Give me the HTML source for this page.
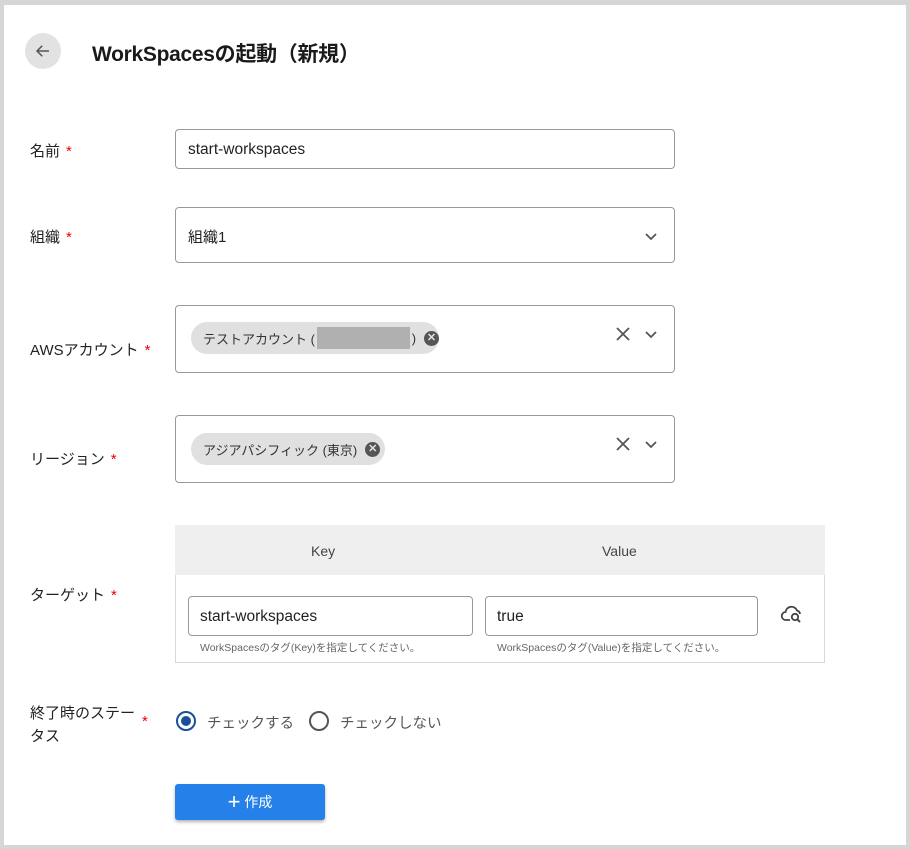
<!DOCTYPE html>
<html><head><meta charset="utf-8"><style>
*{box-sizing:border-box;margin:0;padding:0}
body{width:910px;height:849px;background:#d6d6d6;font-family:"Liberation Sans","Noto Sans CJK JP",sans-serif;color:#222;position:relative;overflow:hidden}
.page{position:absolute;left:4px;top:5px;width:902px;height:840px;background:#fff}
.a{position:absolute;white-space:nowrap}
.lbl{position:absolute;left:30px;font-size:15px;color:#222;white-space:nowrap}
.req{color:#e00;margin-left:6px}
.box{position:absolute;border:1px solid #999;border-radius:4px;background:#fff}
.chip{position:absolute;background:#e0e0e0;border-radius:16px;height:32px;font-size:13px;color:#333;display:flex;align-items:center;padding-left:12px;white-space:nowrap}
.cx{display:inline-block;width:15px;height:15px;border-radius:50%;background:#555;color:#e0e0e0;font-size:11px;line-height:15px;text-align:center;font-weight:bold}
.help{position:absolute;font-size:10.5px;color:#666;white-space:nowrap}
</style></head><body>
<div class="page"></div>
<div class="a" style="left:25px;top:33px;width:36px;height:36px;border-radius:50%;background:#e2e2e2"></div>
<svg class="a" style="left:34px;top:42px" width="18" height="18" viewBox="0 0 24 24"><path d="M20 12H5M11 5l-7 7 7 7" stroke="#555" stroke-width="2" fill="none"/></svg>
<div class="a" style="left:92px;top:38px;font-size:21px;font-weight:bold;color:#1a1a1a;letter-spacing:-0.3px">WorkSpacesの起動（新規）</div>

<div class="lbl" style="top:140px">名前<span class="req">*</span></div>
<div class="box" style="left:175px;top:129px;width:500px;height:40px"></div>
<div class="a" style="left:188px;top:141px;font-size:15.5px">start-workspaces</div>

<div class="lbl" style="top:226px">組織<span class="req">*</span></div>
<div class="box" style="left:175px;top:207px;width:500px;height:56px"></div>
<div class="a" style="left:188px;top:226px;font-size:15px">組織1</div>
<svg class="a" style="left:643px;top:228px" width="16" height="16" viewBox="0 0 16 16"><path d="M3 6l5 5 5-5" stroke="#555" stroke-width="1.8" fill="none"/></svg>

<div class="lbl" style="top:339px">AWSアカウント<span class="req">*</span></div>
<div class="box" style="left:175px;top:305px;width:500px;height:68px"></div>
<div class="chip" style="left:191px;top:322px;width:248px">テストアカウント (<span style="display:inline-block;width:93px;height:22px;background:#b0b0b0;margin:0 2px"></span>)<span class="cx" style="margin-left:8px">✕</span></div>
<svg class="a" style="left:614px;top:325px" width="18" height="18" viewBox="0 0 18 18"><path d="M3 3l12 12M15 3L3 15" stroke="#555" stroke-width="1.8"/></svg>
<svg class="a" style="left:643px;top:326px" width="16" height="16" viewBox="0 0 16 16"><path d="M3 6l5 5 5-5" stroke="#555" stroke-width="1.8" fill="none"/></svg>

<div class="lbl" style="top:448px">リージョン<span class="req">*</span></div>
<div class="box" style="left:175px;top:415px;width:500px;height:68px"></div>
<div class="chip" style="left:191px;top:433px;width:194px">アジアパシフィック (東京)<span class="cx" style="margin-left:8px">✕</span></div>
<svg class="a" style="left:614px;top:435px" width="18" height="18" viewBox="0 0 18 18"><path d="M3 3l12 12M15 3L3 15" stroke="#555" stroke-width="1.8"/></svg>
<svg class="a" style="left:643px;top:436px" width="16" height="16" viewBox="0 0 16 16"><path d="M3 6l5 5 5-5" stroke="#555" stroke-width="1.8" fill="none"/></svg>

<div class="lbl" style="top:584px">ターゲット<span class="req">*</span></div>
<div class="a" style="left:175px;top:525px;width:650px;height:50px;background:#efefef"></div>
<div class="a" style="left:175px;top:575px;width:650px;height:88px;border:1px solid #d8d8d8;border-top:none"></div>
<div class="a" style="left:311px;top:543px;font-size:14px;color:#444">Key</div>
<div class="a" style="left:602px;top:543px;font-size:14px;color:#444">Value</div>
<div class="box" style="left:188px;top:596px;width:285px;height:40px"></div>
<div class="a" style="left:200px;top:608px;font-size:15.5px">start-workspaces</div>
<div class="box" style="left:485px;top:596px;width:273px;height:40px"></div>
<div class="a" style="left:497px;top:608px;font-size:15.5px">true</div>
<div class="help" style="left:200px;top:640px">WorkSpacesのタグ(Key)を指定してください。</div>
<div class="help" style="left:497px;top:640px">WorkSpacesのタグ(Value)を指定してください。</div>
<svg class="a" style="left:780px;top:603px" width="24" height="22" viewBox="0 0 24 22"><path d="M10 17H6a4 4 0 0 1-.5-8A6 6 0 0 1 17 7.5a4 4 0 0 1 3 3.5" stroke="#444" stroke-width="1.8" fill="none"/><circle cx="15" cy="14" r="3.2" stroke="#444" stroke-width="1.8" fill="none"/><path d="M17.3 16.3L20 19" stroke="#444" stroke-width="2"/></svg>

<div class="lbl" style="top:702px;line-height:23px">終了時のステー<br>タス</div>
<div class="a" style="left:142px;top:713px;color:#e00;font-size:15px">*</div>
<div class="a" style="left:176px;top:711px;width:20px;height:20px;border:2px solid #1a4f9c;border-radius:50%"></div>
<div class="a" style="left:181px;top:716px;width:10px;height:10px;background:#1a4f9c;border-radius:50%"></div>
<div class="a" style="left:207px;top:712px;font-size:14.5px;color:#555">チェックする</div>
<div class="a" style="left:309px;top:711px;width:20px;height:20px;border:2px solid #555;border-radius:50%"></div>
<div class="a" style="left:340px;top:712px;font-size:14.5px;color:#555">チェックしない</div>

<div class="a" style="left:175px;top:784px;width:150px;height:36px;background:#2680ea;border-radius:3px;box-shadow:0 2px 3px rgba(0,0,0,.3);color:#fff;font-size:14px;display:flex;align-items:center;justify-content:center"><span style="font-size:22px;margin-right:4px;line-height:1">+</span>作成</div>
</body></html>
